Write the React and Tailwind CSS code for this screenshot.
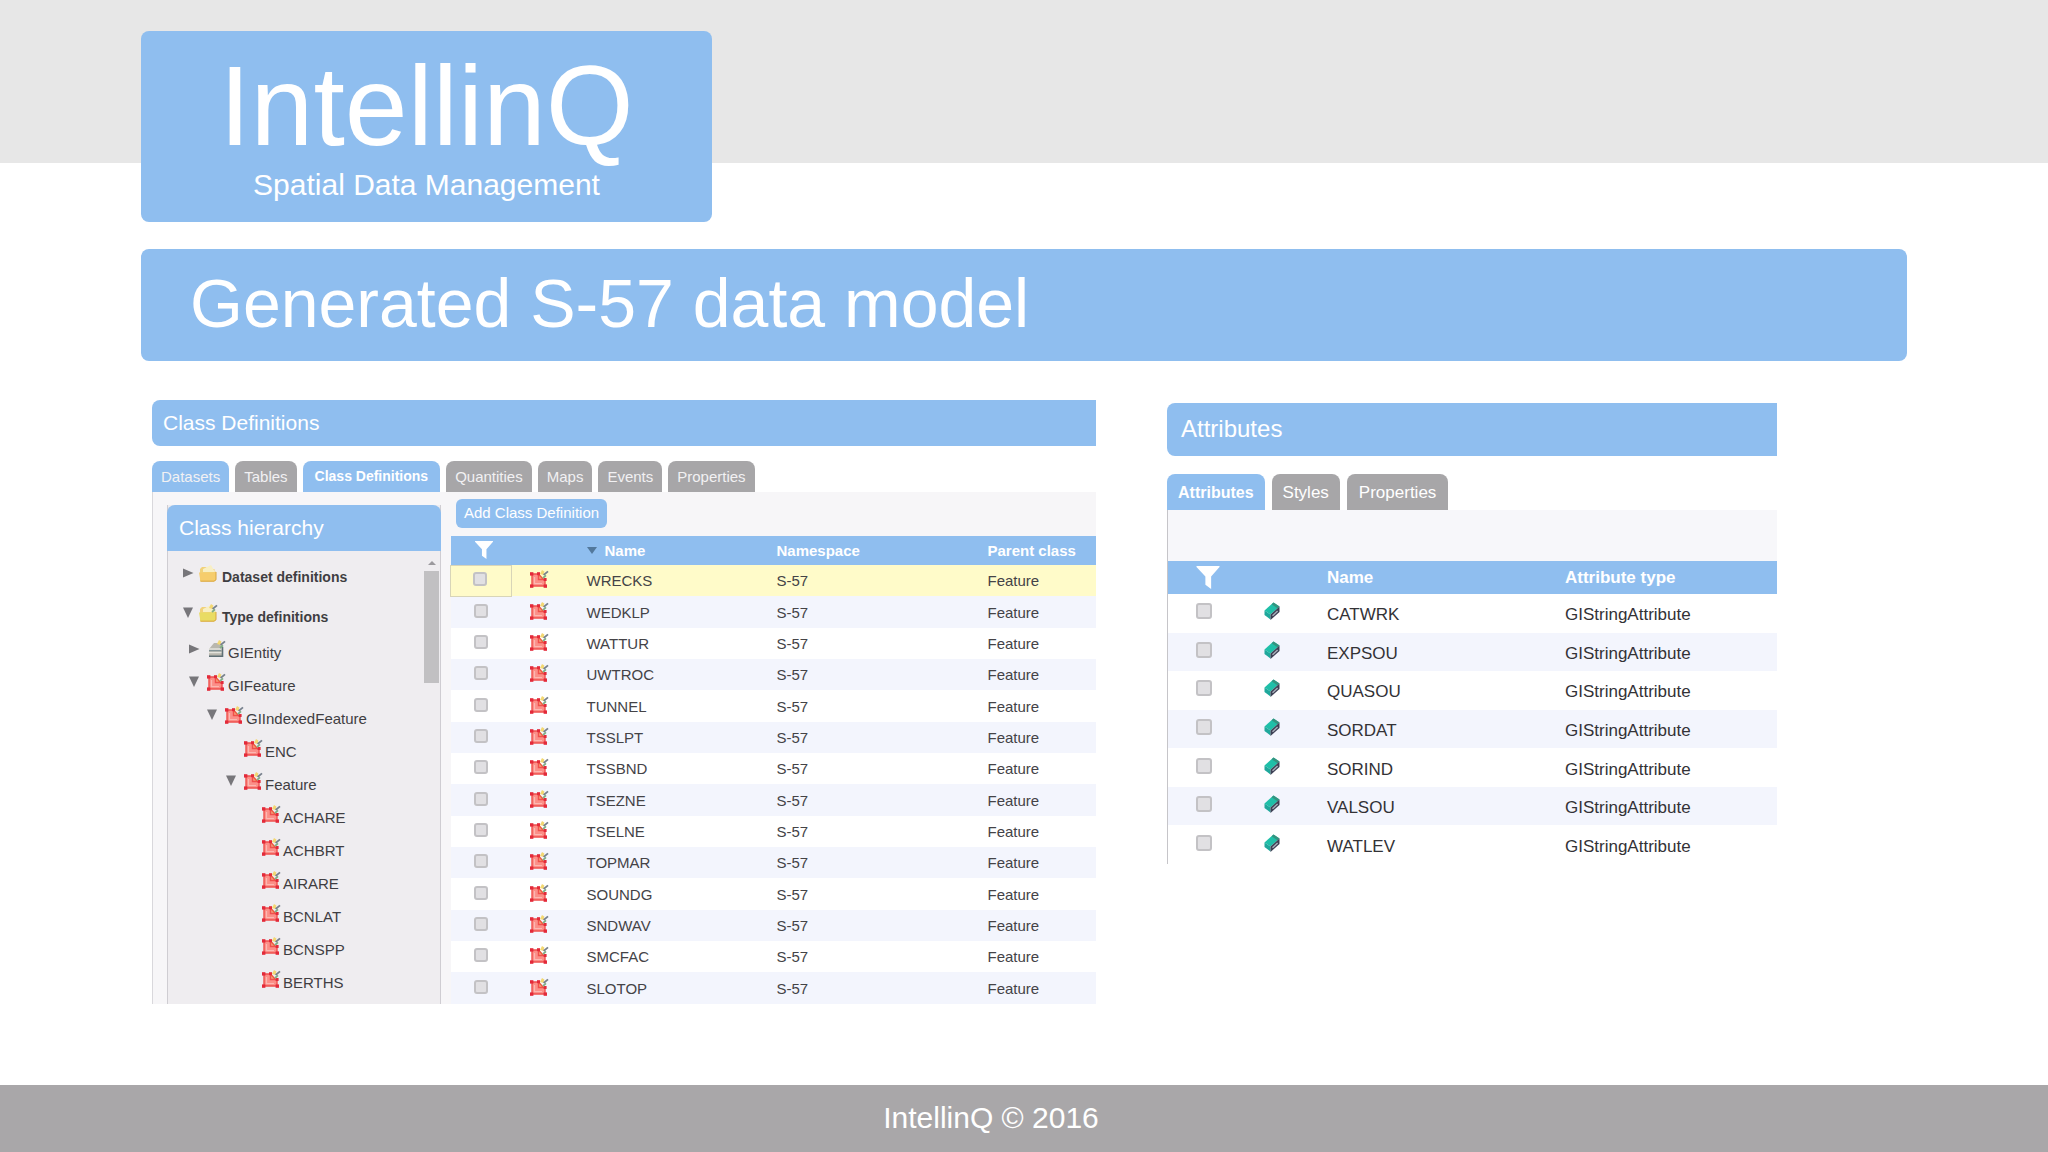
import React from 'react';

const classes = [
  'WRECKS', 'WEDKLP', 'WATTUR', 'UWTROC', 'TUNNEL', 'TSSLPT', 'TSSBND',
  'TSEZNE', 'TSELNE', 'TOPMAR', 'SOUNDG', 'SNDWAV', 'SMCFAC', 'SLOTOP',
];

const attributes = ['CATWRK', 'EXPSOU', 'QUASOU', 'SORDAT', 'SORIND', 'VALSOU', 'WATLEV'];

const class_tabs = ['Datasets', 'Tables', 'Class Definitions', 'Quantities', 'Maps', 'Events', 'Properties'];

const tree = [
  { name: 'GIEntity', level: 0, arrow: 'right', icon: 'entity' },
  { name: 'GIFeature', level: 0, arrow: 'down', icon: 'feature' },
  { name: 'GIIndexedFeature', level: 1, arrow: 'down', icon: 'feature' },
  { name: 'ENC', level: 2, arrow: null, icon: 'feature' },
  { name: 'Feature', level: 2, arrow: 'down', icon: 'feature' },
  { name: 'ACHARE', level: 3, arrow: null, icon: 'feature' },
  { name: 'ACHBRT', level: 3, arrow: null, icon: 'feature' },
  { name: 'AIRARE', level: 3, arrow: null, icon: 'feature' },
  { name: 'BCNLAT', level: 3, arrow: null, icon: 'feature' },
  { name: 'BCNSPP', level: 3, arrow: null, icon: 'feature' },
  { name: 'BERTHS', level: 3, arrow: null, icon: 'feature' },
];

const indents = ['pl-[20px]', 'pl-[38px]', 'pl-[57px]', 'pl-[75px]'];

const Arrow = ({ direction }) => (
  <svg className="h-3 w-3 shrink-0" viewBox="0 0 12 12" fill="#77767a">
    { direction === 'right' && <path d="M1 1.5L11.500 6L1 10.500z" /> }
    { direction === 'down' && <path d="M1 0.5H11L6 11z" /> }
  </svg>
);

const Pencil = () => (
  <>
    <path d="M11 5L13 1L15.4 2.4L14.5 6z" fill="#f3d873" />
    <path d="M14.6 6L19 2.4" stroke="#77808c" strokeWidth="1.8" />
    <path d="M14 9L17 6.4" stroke="#7fae86" strokeWidth="1.8" />
  </>
);

const FeatureIcon = () => (
  <svg className="h-5 w-5 shrink-0" viewBox="0 0 20 20" fill="none">
    <path d="M3 5H9.500V10.500H16V17H3z" fill="#fb8f88" />
    <path d="M9.500 5L15 10.500H9.500z" fill="#f6a07a" />
    <path d="M3 5H9.500V10.500H16V17H3z" stroke="#f0504c" strokeWidth="1.4" />
    <path d="M9.500 5L14 10" stroke="#ec5a3e" strokeWidth="1.4" />
    <path d="M5.500 8V14.500H13" stroke="#fcb7b2" strokeWidth="1.2" />
    <g fill="#e32a3a">
      <rect x="1" y="3.200" width="3.400" height="3.400" />
      <rect x="1" y="15.400" width="3.400" height="3.400" />
      <rect x="14.600" y="15.400" width="3.400" height="3.400" />
      <rect x="14.600" y="9" width="3" height="3" />
      <rect x="8" y="3.200" width="3" height="3" />
    </g>
    <Pencil />
  </svg>
);

const EntityIcon = () => (
  <svg className="h-5 w-5 shrink-0" viewBox="0 0 20 20" fill="none">
    <path d="M3 10L8 4H14L17 8V17H3z" fill="#b9b7ae" />
    <path d="M3 10H16M3 13.5H16" stroke="#e4e3dd" strokeWidth="1.4" />
    <path d="M3 17.2H16.5V8" stroke="#5f7076" strokeWidth="1.6" />
    <path d="M3 11.7H15" stroke="#7d8f95" strokeWidth="1.2" />
    <Pencil />
  </svg>
);

const FolderIcon = ({ edit }) => (
  <svg className="h-5 w-5 shrink-0" viewBox="0 0 20 20" fill="none">
    <path d="M2 18V6L4 4H8L10 6H16.5V18z" fill="#f1d27a" />
    <path d="M5 6L13 2L17 9H5z" fill="#f8efc4" />
    <path d="M1 9.5H15L18 8.5V17L16 18.5H2.5z" fill={edit ? '#e9dc63' : '#f6cd6c'} />
    <path d="M2.5 18.2H16L18 16.8V9" stroke="#d9a63e" strokeWidth="1" />
    { edit && <Pencil /> }
  </svg>
);

const AttributeIcon = () => (
  <svg className="h-[18px] w-4" viewBox="0 0 16 18">
    <path d="M0.500 8.500L9.500 0.500L15.500 4.500L6.500 12.500z" fill="#1fbfa8" />
    <path d="M9.500 0.500L15.500 4.500L13.500 6.200L7.600 2.300z" fill="#35937f" />
    <path d="M0.500 8.500L6.500 12.500V17.500L0.500 13z" fill="#1fa89c" />
    <path d="M6.500 12.500L15.500 4.500V10L6.500 18z" fill="#3d4054" />
    <path d="M8.500 13.800L13.600 9" stroke="#a9aeba" strokeWidth="1.4" />
  </svg>
);

const Funnel = ({ className }) => (
  <svg className={className} viewBox="0 0 22 22" fill="#fff">
    <path d="M0 0H22V1L14 10V22L8.500 18V10L0 1z" />
  </svg>
);

const Checkbox = ({ label, className }) => (
  <input
    type="checkbox"
    aria-label={label}
    className={`block appearance-none rounded-[3px] border-2 border-[#c3c2c5] bg-[#e1e0e3] ${className}`}
  />
);

const ClassTree = () => (
  <section className="flex w-[274px] shrink-0 flex-col border-x border-[#cfcdd2] bg-[#efedf0]">
    <h3 className="-mx-px h-[46px] rounded-t-lg bg-[#8fbeef] px-3 text-[21px] leading-[46px] text-white">
      Class hierarchy
    </h3>
    <div className="flex flex-1 justify-between">
      <ul className="flex-1 text-[15px] leading-5 text-[#3f3e42]">
        <li className="flex h-[43px] items-center gap-1 pt-2 pl-[14px] text-[14px] font-bold">
          <div className="flex items-center gap-1 pb-2"><Arrow direction="right" /><FolderIcon /></div>
          Dataset definitions
        </li>
        <li className="flex h-[38px] items-center gap-1 pt-2 pl-[14px] text-[14px] font-bold">
          <div className="flex items-center gap-1 pb-2"><Arrow direction="down" /><FolderIcon edit /></div>
          Type definitions
        </li>
        { tree.map((node) => (
          <li key={node.name} className={`flex h-[33px] items-center gap-[2px] pt-2 ${indents[node.level]}`}>
            <div className="flex items-center gap-[6px] pb-2">
              <Arrow direction={node.arrow} />
              { node.icon === 'feature' ? <FeatureIcon /> : <EntityIcon /> }
            </div>
            { node.name }
          </li>
        )) }
      </ul>
      <div className="flex w-[17px] flex-col items-center pt-2">
        <svg className="h-2 w-2" viewBox="0 0 8 8" fill="#9b999d"><path d="M0 6L4 2L8 6z" /></svg>
        <div className="mt-1 h-[112px] w-[15px] bg-[#c1c0c2]" />
      </div>
    </div>
  </section>
);

const ClassTable = () => (
  <table className="h-[468px] w-full table-fixed text-left text-[15px] leading-5 text-[#444347]">
    <colgroup>
      <col className="w-[61px]" />
      <col className="w-[75px]" />
      <col className="w-[190px]" />
      <col className="w-[211px]" />
      <col />
    </colgroup>
    <thead>
      <tr className="h-[29px] bg-[#8fbeef] text-white">
        <th className="p-0" aria-label="Filter"><Funnel className="ml-[23px] h-[18px] w-5" /></th>
        <th className="p-0" aria-label="Icon" />
        <th className="p-0">
          <span className="flex items-center gap-2">
            <svg className="h-[7px] w-[10px]" viewBox="0 0 10 7" fill="#52789c"><path d="M0 0H10L5 7z" /></svg>
            Name
          </span>
        </th>
        <th className="p-0">Namespace</th>
        <th className="p-0">Parent class</th>
      </tr>
    </thead>
    <tbody>
      { classes.map((name, index) => (
        <tr key={name} className={index === 0 ? 'bg-[#fffbc9]' : 'odd:bg-white even:bg-[#f3f5fd]'}>
          <td className={index === 0 ? 'border border-[#d8d5b8] p-0 pb-[3px]' : 'p-0 pb-[3px]'}>
            <Checkbox label={name} className={index === 0 ? 'ml-[22px] h-[14px] w-[14px]' : 'ml-[23px] h-[14px] w-[14px]'} />
          </td>
          <td className="p-0 pb-[3px] pl-[17px]"><FeatureIcon /></td>
          <td className="p-0 pt-px">{ name }</td>
          <td className="p-0 pt-px">S-57</td>
          <td className="p-0 pt-px">Feature</td>
        </tr>
      )) }
    </tbody>
  </table>
);

const ClassDefinitions = () => (
  <section className="w-[944px]">
    <h2 className="h-[46px] rounded-l-lg bg-[#8fbeef] px-[11px] text-[21px] leading-[45px] text-white">
      Class Definitions
    </h2>
    <nav className="mt-[15px] flex gap-[6px] text-[15px] leading-[31px] text-[#f2f1f3]">
      { class_tabs.map((tab) => {
        if (tab === 'Class Definitions') {
          return (
            <button type="button" key={tab} className="rounded-t-lg bg-[#8fbeef] px-3 text-[14px] font-bold text-white">{ tab }</button>
          );
        }
        return (
          <button
            type="button"
            key={tab}
            className={`rounded-t-lg px-[9px] ${tab === 'Datasets' ? 'bg-[#8fbeef]' : 'bg-[#a7a6a8]'}`}
          >
            { tab }
          </button>
        );
      }) }
    </nav>
    <div className="flex gap-[9px] border-l border-[#d9d8dc] bg-[#f7f6f8]">
      <div className="flex pt-[13px] pl-[14px]">
        <ClassTree />
      </div>
      <div className="flex-1 pt-[7px]">
        <button type="button" className="ml-[6px] block h-[29px] rounded-md bg-[#8fbeef] px-2 text-[15px] text-white">
          Add Class Definition
        </button>
        <div className="pt-2">
          <ClassTable />
        </div>
      </div>
    </div>
  </section>
);

const Attributes = () => (
  <section className="mt-[3px] w-[610px]">
    <h2 className="h-[53px] rounded-l-lg bg-[#8fbeef] px-[14px] text-[24px] leading-[52px] text-white">
      Attributes
    </h2>
    <nav className="mt-[18px] flex gap-[7px] text-[17px] leading-[37px] text-white">
      <button type="button" className="h-9 rounded-t-lg bg-[#8fbeef] px-[11px] text-[16px] font-bold">Attributes</button>
      <button type="button" className="h-9 rounded-t-lg bg-[#a7a6a8] px-[11px]">Styles</button>
      <button type="button" className="h-9 rounded-t-lg bg-[#a7a6a8] px-3">Properties</button>
    </nav>
    <div className="border-l border-[#c6c5c9] bg-[#f7f7fa] pt-[51px]">
      <table className="h-[303px] w-full table-fixed text-left text-[17px] leading-5 text-[#333236]">
        <colgroup>
          <col className="w-[86px]" />
          <col className="w-[73px]" />
          <col className="w-[238px]" />
          <col />
        </colgroup>
        <thead>
          <tr className="h-[33px] bg-[#8fbeef] text-white">
            <th className="p-0" aria-label="Filter"><Funnel className="ml-7 h-[23px] w-6" /></th>
            <th className="p-0" aria-label="Icon" />
            <th className="p-0">Name</th>
            <th className="p-0">Attribute type</th>
          </tr>
        </thead>
        <tbody>
          { attributes.map((name) => (
            <tr key={name} className="odd:bg-white even:bg-[#f3f5fd]">
              <td className="p-0 pb-1"><Checkbox label={name} className="ml-7 h-4 w-4" /></td>
              <td className="p-0 pb-1 pl-[10px]"><AttributeIcon /></td>
              <td className="p-0 pt-1">{ name }</td>
              <td className="p-0 pt-1">GIStringAttribute</td>
            </tr>
          )) }
        </tbody>
      </table>
    </div>
  </section>
);

const App = () => {
  return (
    <div className="flex min-h-screen flex-col bg-white font-['Liberation_Sans',Arial,sans-serif]">
      <header className="h-[163px] bg-[#e7e7e7] px-[141px] pt-[31px]">
        <div className="flex h-[191px] w-[571px] flex-col items-center rounded-lg bg-[#8fbeef] pt-4 text-white">
          <div className="text-[113px] leading-[118px]">IntellinQ</div>
          <div className="text-[30px] leading-10">Spatial Data Management</div>
        </div>
      </header>
      <main className="flex-1 px-[141px] pt-[86px]">
        <h1 className="h-28 rounded-lg bg-[#8fbeef] px-[49px] text-[68px] leading-[108px] text-white">
          Generated S-57 data model
        </h1>
        <div className="mt-[39px] flex items-start gap-[71px] pl-[11px]">
          <ClassDefinitions />
          <Attributes />
        </div>
      </main>
      <footer className="h-[67px] bg-[#a9a7a9] pr-[66px] text-center text-[30px] leading-[66px] text-white">
        IntellinQ © 2016
      </footer>
    </div>
  );
};

export default App;
